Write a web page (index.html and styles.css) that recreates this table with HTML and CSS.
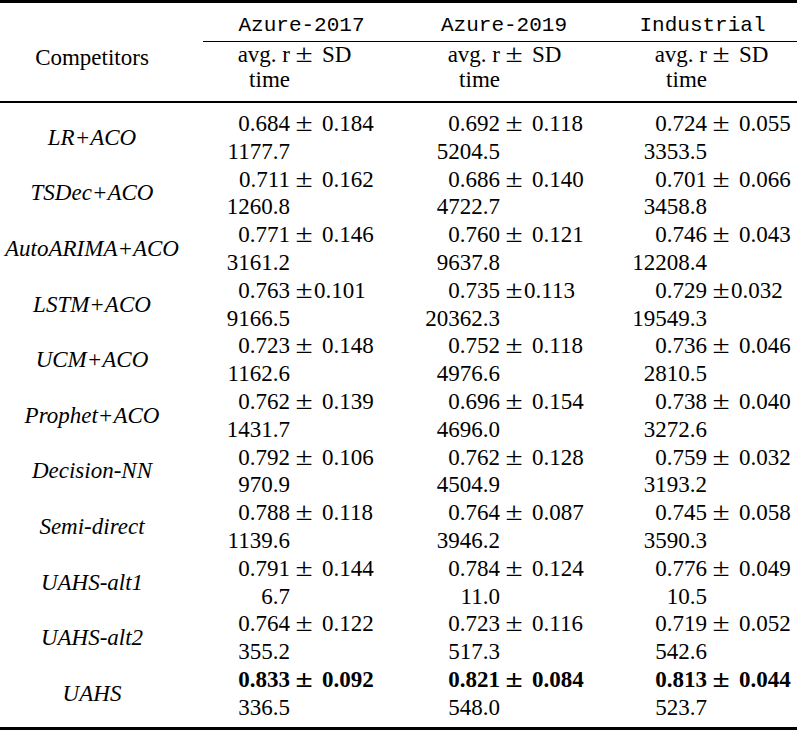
FILE: index.html
```html
<!DOCTYPE html>
<html>
<head>
<meta charset="utf-8">
<link rel="stylesheet" href="styles.css">
</head>
<body>
<div class="tbl">
  <div class="rule top"></div>

  <div class="c1"></div>
  <div class="grp">Azure-2017</div>
  <div class="grp">Azure-2019</div>
  <div class="grp">Industrial</div>

  <div class="c1 hd comp">Competitors</div>
  <div class="r hd">avg. r<br>time</div><div class="l hd"><span class="pm">±</span>SD</div>
  <div class="r hd">avg. r<br>time</div><div class="l hd"><span class="pm">±</span>SD</div>
  <div class="r hd">avg. r<br>time</div><div class="l hd"><span class="pm">±</span>SD</div>

  <div class="rule mid"></div>

  <div class="c1 lab">LR+ACO</div>
  <div class="r">0.684<br>1177.7</div><div class="l"><span class="pm">±</span>0.184</div>
  <div class="r">0.692<br>5204.5</div><div class="l"><span class="pm">±</span>0.118</div>
  <div class="r">0.724<br>3353.5</div><div class="l"><span class="pm">±</span>0.055</div>

  <div class="c1 lab">TSDec+ACO</div>
  <div class="r">0.711<br>1260.8</div><div class="l"><span class="pm">±</span>0.162</div>
  <div class="r">0.686<br>4722.7</div><div class="l"><span class="pm">±</span>0.140</div>
  <div class="r">0.701<br>3458.8</div><div class="l"><span class="pm">±</span>0.066</div>

  <div class="c1 lab">AutoARIMA+ACO</div>
  <div class="r">0.771<br>3161.2</div><div class="l"><span class="pm">±</span>0.146</div>
  <div class="r">0.760<br>9637.8</div><div class="l"><span class="pm">±</span>0.121</div>
  <div class="r">0.746<br>12208.4</div><div class="l"><span class="pm">±</span>0.043</div>

  <div class="c1 lab">LSTM+ACO</div>
  <div class="r">0.763<br>9166.5</div><div class="l"><span class="pm tight">±</span>0.101</div>
  <div class="r">0.735<br>20362.3</div><div class="l"><span class="pm tight">±</span>0.113</div>
  <div class="r">0.729<br>19549.3</div><div class="l"><span class="pm tight">±</span>0.032</div>

  <div class="c1 lab">UCM+ACO</div>
  <div class="r">0.723<br>1162.6</div><div class="l"><span class="pm">±</span>0.148</div>
  <div class="r">0.752<br>4976.6</div><div class="l"><span class="pm">±</span>0.118</div>
  <div class="r">0.736<br>2810.5</div><div class="l"><span class="pm">±</span>0.046</div>

  <div class="c1 lab">Prophet+ACO</div>
  <div class="r">0.762<br>1431.7</div><div class="l"><span class="pm">±</span>0.139</div>
  <div class="r">0.696<br>4696.0</div><div class="l"><span class="pm">±</span>0.154</div>
  <div class="r">0.738<br>3272.6</div><div class="l"><span class="pm">±</span>0.040</div>

  <div class="c1 lab">Decision-NN</div>
  <div class="r">0.792<br>970.9</div><div class="l"><span class="pm">±</span>0.106</div>
  <div class="r">0.762<br>4504.9</div><div class="l"><span class="pm">±</span>0.128</div>
  <div class="r">0.759<br>3193.2</div><div class="l"><span class="pm">±</span>0.032</div>

  <div class="c1 lab">Semi-direct</div>
  <div class="r">0.788<br>1139.6</div><div class="l"><span class="pm">±</span>0.118</div>
  <div class="r">0.764<br>3946.2</div><div class="l"><span class="pm">±</span>0.087</div>
  <div class="r">0.745<br>3590.3</div><div class="l"><span class="pm">±</span>0.058</div>

  <div class="c1 lab">UAHS-alt1</div>
  <div class="r">0.791<br>6.7</div><div class="l"><span class="pm">±</span>0.144</div>
  <div class="r">0.784<br>11.0</div><div class="l"><span class="pm">±</span>0.124</div>
  <div class="r">0.776<br>10.5</div><div class="l"><span class="pm">±</span>0.049</div>

  <div class="c1 lab">UAHS-alt2</div>
  <div class="r">0.764<br>355.2</div><div class="l"><span class="pm">±</span>0.122</div>
  <div class="r">0.723<br>517.3</div><div class="l"><span class="pm">±</span>0.116</div>
  <div class="r">0.719<br>542.6</div><div class="l"><span class="pm">±</span>0.052</div>

  <div class="c1 lab">UAHS</div>
  <div class="r"><b>0.833</b><br>336.5</div><div class="l best"><span class="pm">±</span>0.092</div>
  <div class="r"><b>0.821</b><br>548.0</div><div class="l best"><span class="pm">±</span>0.084</div>
  <div class="r"><b>0.813</b><br>523.7</div><div class="l best"><span class="pm">±</span>0.044</div>

  <div class="rule bot"></div>
</div>
</body>
</html>
```

FILE: styles.css
```css
html, body {
  margin: 0;
  padding: 0;
  background: #fff;
}

body {
  font-family: "Liberation Serif", "Times New Roman", serif;
  font-size: 23px;
  color: #000;
}

.tbl {
  display: grid;
  grid-template-columns: 203px 87px 110px 100px 108px 99px 90px;
  width: 797px;
  line-height: 27.8px;
}

.rule {
  grid-column: 1 / -1;
  background: #000;
}

.rule.top {
  height: 3px;
}

.rule.mid {
  height: 2px;
  margin-bottom: 7px;
}

.rule.bot {
  height: 3px;
  margin-top: 5.4px;
}

.grp {
  grid-column: span 2;
  font-family: "Liberation Mono", "DejaVu Sans Mono", monospace;
  font-size: 21px;
  line-height: 24px;
  text-align: center;
  padding: 11px 0 3px;
  border-bottom: 1px solid #000;
}

.hd {
  line-height: 25px;
  padding-bottom: 9px;
}

.hd.comp {
  padding-top: 3px;
  padding-bottom: 6px;
}

.c1 {
  padding-right: 19px;
  text-align: center;
}

.lab {
  font-style: italic;
  display: flex;
  align-items: center;
  justify-content: center;
}

.r {
  text-align: right;
  white-space: nowrap;
}

.l {
  text-align: left;
  white-space: nowrap;
}

.pm {
  display: inline-block;
  width: 16px;
  text-align: center;
  font-size: 26px;
  line-height: 20px;
  transform: scaleX(1.2);
  margin: 0 10px 0 6px;
}

.pm.tight {
  margin-right: 2px;
}

.best {
  font-weight: bold;
}
```
